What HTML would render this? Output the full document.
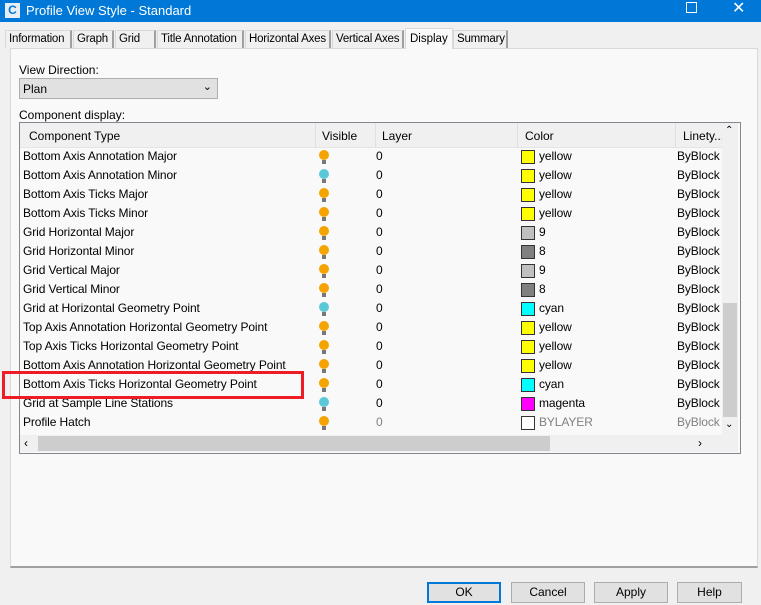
<html><head><style>
body{margin:0;width:761px;height:605px;background:#f0f0f0;font-family:"Liberation Sans",sans-serif;font-size:12px;color:#000;position:relative;overflow:hidden}
.a{position:absolute}
.tab{position:absolute;top:30px;border:1px solid #d9d9d9;border-bottom:none;background:#f0f0f0;padding:2px 0 0 3px;box-sizing:border-box;height:18px;border-right:2px solid #a0a0a0;white-space:nowrap;overflow:hidden;font-size:11.5px;letter-spacing:-0.2px}
.row{position:absolute;left:20px;width:702px;height:19px;letter-spacing:-0.1px}
.row span{position:absolute;top:2px;white-space:nowrap}
.bulb{position:absolute;left:299px;top:3px;width:10px;height:10px;border-radius:50%}
.bulb:after{content:"";position:absolute;left:3px;top:10px;width:4px;height:4px;background:#777}
.sw{position:absolute;left:501px;top:3px;width:14px;height:14px;border:1px solid #333;box-sizing:border-box}
.btn{position:absolute;top:582px;height:21px;border:1px solid #adadad;background:#e1e1e1;box-sizing:border-box;text-align:center;line-height:19px}
</style></head><body>
<div class="a" style="left:0;top:0;width:761px;height:22px;background:#0078d7;color:#fff">
<div class="a" style="left:5px;top:3px;width:15px;height:15px;background:#e8eef5;color:#0078d7;font-weight:bold;font-size:12px;text-align:center;line-height:15px">C</div>
<div class="a" style="left:26px;top:3px;font-size:13px">Profile View Style - Standard</div>
<div class="a" style="left:686px;top:2px;width:9px;height:9px;border:1px solid #fff"></div>
<div class="a" style="left:732px;top:-2px;font-size:16px">✕</div>
</div>
<div class="tab" style="left:5px;width:67px">Information</div>
<div class="tab" style="left:73px;width:41px">Graph</div>
<div class="tab" style="left:115px;width:41px">Grid</div>
<div class="tab" style="left:157px;width:87px">Title Annotation</div>
<div class="tab" style="left:245px;width:86px">Horizontal Axes</div>
<div class="tab" style="left:332px;width:72px">Vertical Axes</div>
<div class="a" style="left:405px;top:28px;width:48px;height:21px;background:#f9f9f9;border:1px solid #d9d9d9;border-bottom:none;padding:4px 0 0 4px;box-sizing:border-box;z-index:2;font-size:11.5px">Display</div>
<div class="tab" style="left:453px;width:55px">Summary</div>
<div class="a" style="left:10px;top:48px;width:748px;height:520px;background:#f9f9f9;border:1px solid #d9d9d9;border-bottom:2px solid #a0a0a0;box-sizing:border-box"></div>
<div class="a" style="left:19px;top:63px">View Direction:</div>
<div class="a" style="left:19px;top:78px;width:199px;height:21px;background:#e1e1e1;border:1px solid #adadad;box-sizing:border-box;padding:3px 0 0 3px">Plan<span class="a" style="right:5px;top:1px;font-size:11px">&#8964;</span></div>
<div class="a" style="left:19px;top:108px">Component display:</div>
<div class="a" style="left:19px;top:122px;width:722px;height:332px;background:#f9f9f9;border:1px solid #828790;box-sizing:border-box"></div>
<div class="a" style="left:20px;top:123px;width:702px;height:24px;background:#f0f0f0;border-bottom:1px solid #e5e5e5">
<span class="a" style="left:9px;top:6px">Component Type</span>
<span class="a" style="left:295px;top:0;width:1px;height:24px;background:#e0e0e0"></span>
<span class="a" style="left:302px;top:6px">Visible</span>
<span class="a" style="left:355px;top:0;width:1px;height:24px;background:#e0e0e0"></span>
<span class="a" style="left:362px;top:6px">Layer</span>
<span class="a" style="left:497px;top:0;width:1px;height:24px;background:#e0e0e0"></span>
<span class="a" style="left:505px;top:6px">Color</span>
<span class="a" style="left:655px;top:0;width:1px;height:24px;background:#e0e0e0"></span>
<span class="a" style="left:663px;top:6px">Linety...</span>
</div>
<div class="a" style="left:722px;top:123px;width:16px;height:312px;background:#f0f0f0"><div class="a" style="left:3px;top:2px;font-size:10px">&#8963;</div><div class="a" style="left:1px;top:180px;width:14px;height:114px;background:#cdcdcd"></div><div class="a" style="left:3px;top:296px;font-size:10px">&#8964;</div></div>
<div class="a" style="left:20px;top:435px;width:718px;height:17px;background:#f0f0f0"><div class="a" style="left:4px;top:1px">&#8249;</div><div class="a" style="left:18px;top:1px;width:512px;height:15px;background:#cdcdcd"></div><div class="a" style="left:678px;top:1px">&#8250;</div></div>
<div id="rows"></div>
<script>
var d=[["Bottom Axis Annotation Major","o","#ffff00","yellow"],["Bottom Axis Annotation Minor","c","#ffff00","yellow"],["Bottom Axis Ticks Major","o","#ffff00","yellow"],["Bottom Axis Ticks Minor","o","#ffff00","yellow"],["Grid Horizontal Major","o","#c0c0c0","9"],["Grid Horizontal Minor","o","#808080","8"],["Grid Vertical Major","o","#c0c0c0","9"],["Grid Vertical Minor","o","#808080","8"],["Grid at Horizontal Geometry Point","c","#00ffff","cyan"],["Top Axis Annotation Horizontal Geometry Point","o","#ffff00","yellow"],["Top Axis Ticks Horizontal Geometry Point","o","#ffff00","yellow"],["Bottom Axis Annotation Horizontal Geometry Point","o","#ffff00","yellow"],["Bottom Axis Ticks Horizontal Geometry Point","o","#00ffff","cyan"],["Grid at Sample Line Stations","c","#ff00ff","magenta"],["Profile Hatch","o","#ffffff","BYLAYER"]];
var h="";d.forEach(function(r,i){var g=i==14?"color:#808080":"";h+='<div class="row" style="top:'+(147+19*i)+'px"><span style="left:3px;width:290px;overflow:hidden">'+r[0]+'</span><div class="bulb" style="background:'+(r[1]=="o"?"#f5a300":"#5bc8d8")+'"></div><span style="left:356px;'+g+'">0</span><div class="sw" style="background:'+r[2]+'"></div><span style="left:519px;'+g+'">'+r[3]+'</span><span style="left:657px;'+g+'">ByBlock</span></div>'});
document.getElementById("rows").innerHTML=h;
</script>
<div class="a" style="left:2px;top:371px;width:302px;height:28px;border:3px solid #ee1c25;box-sizing:border-box"></div>
<div class="btn" style="left:427px;width:74px;border:2px solid #0078d7;line-height:17px">OK</div>
<div class="btn" style="left:511px;width:74px">Cancel</div>
<div class="btn" style="left:594px;width:74px">Apply</div>
<div class="btn" style="left:677px;width:65px">Help</div>
</body></html>
